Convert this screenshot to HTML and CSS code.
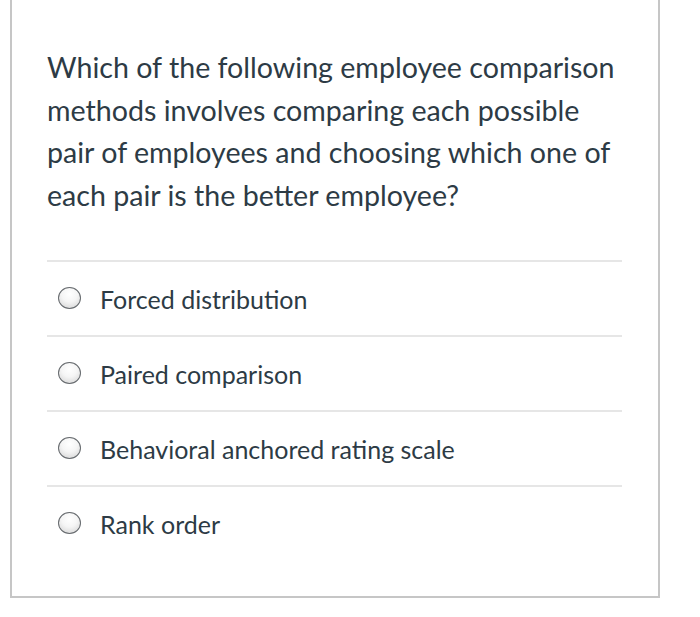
FILE: index.html
```html
<!DOCTYPE html>
<html>
<head>
<meta charset="utf-8">
<link rel="stylesheet" href="styles.css">
</head>
<body>
<div class="card">
  <p class="question">Which of the following employee comparison methods involves comparing each possible pair of employees and choosing which one of each pair is the better employee?</p>
  <ul class="answers">
    <li class="answer"><span class="radio"></span><span class="label">Forced distribution</span></li>
    <li class="answer"><span class="radio"></span><span class="label">Paired comparison</span></li>
    <li class="answer"><span class="radio"></span><span class="label">Behavioral anchored rating scale</span></li>
    <li class="answer"><span class="radio"></span><span class="label">Rank order</span></li>
  </ul>
</div>
</body>
</html>
```
FILE: styles.css
```css
html, body {
  margin: 0;
  padding: 0;
  background: #ffffff;
}
body {
  font-family: Lato, "Open Sans", sans-serif;
  color: #2d3b45;
}
.card {
  margin-left: 10px;
  width: 650px;
  height: 598px;
  box-sizing: border-box;
  border: 2px solid #c6c6c6;
  border-top: none;
  padding: 46px 36px 0 35px;
}
.question {
  margin: 0;
  font-size: 28.6px;
  line-height: 42.5px;
  width: 575px;
}
.answers {
  list-style: none;
  margin: 44px 0 0 0;
  padding: 0;
}
.answer {
  display: flex;
  align-items: center;
  height: 73px;
  border-top: 2px solid #e6e6e6;
  padding-left: 11px;
}
.radio {
  width: 21px;
  height: 20px;
  border-radius: 50%;
  border: 1.5px solid #666a6e;
  background: radial-gradient(circle at 50% 30%, #ffffff 0%, #f5f5f5 45%, #d0d0d0 100%);
  flex: none;
  margin-bottom: 2px;
}
.label {
  margin-left: 19px;
  font-size: 25px;
}
```
